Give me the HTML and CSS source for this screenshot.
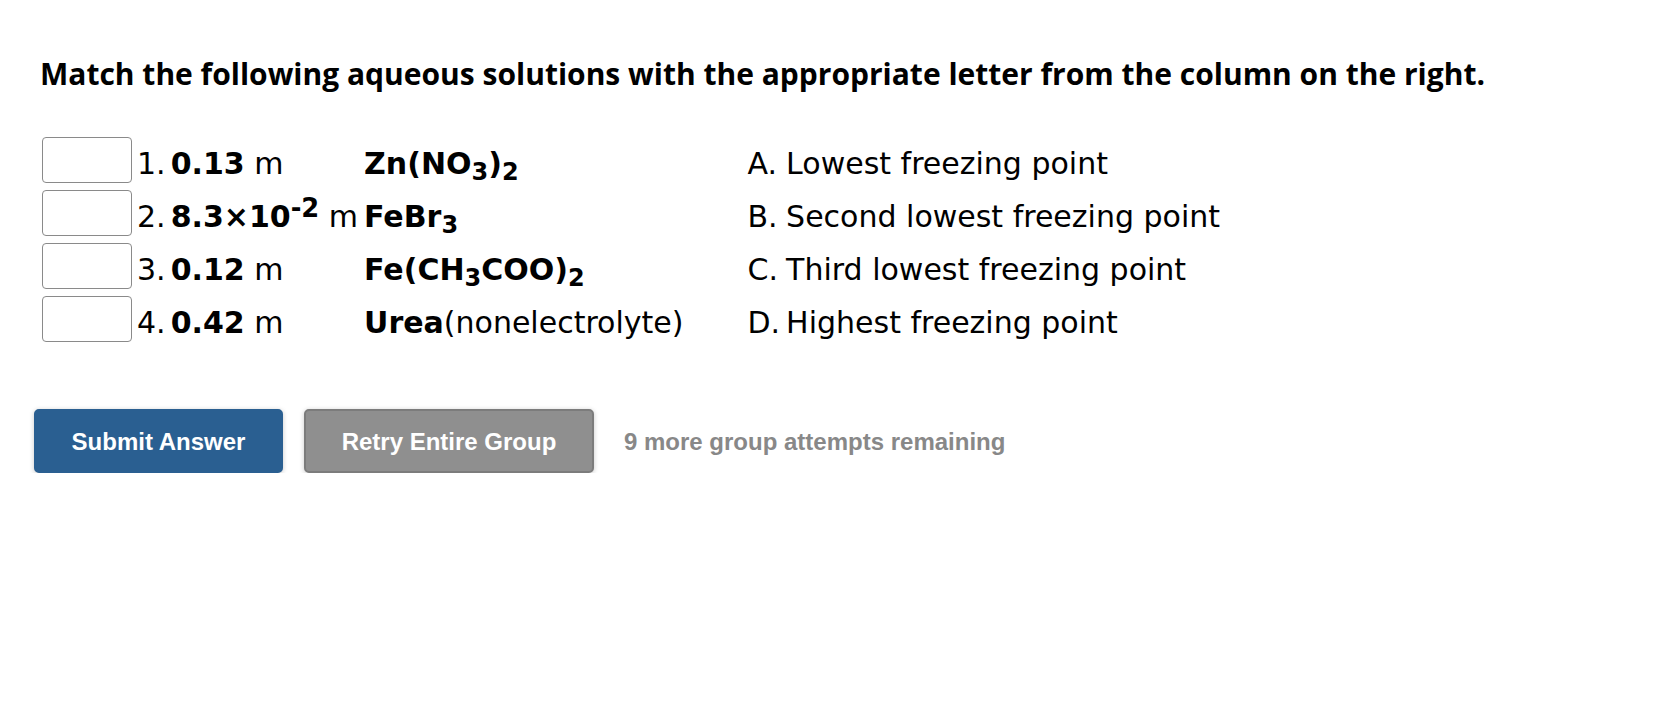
FILE: index.html
```html
<!DOCTYPE html>
<html lang="en">
<head>
<meta charset="utf-8">
<title>Match aqueous solutions</title>
<link rel="stylesheet" href="styles.css">
</head>
<body>
<div class="page">
  <p class="prompt">Match the following aqueous solutions with the appropriate letter from the column on the right.</p>

  <div class="match">
    <input class="ans" type="text" aria-label="Answer 1">
    <span class="num">1.</span>
    <span class="val"><b>0.13</b> m</span>
    <span class="formula"><b>Zn(NO<sub>3</sub>)<sub>2</sub></b></span>
    <span class="letter">A.</span>
    <span class="choice">Lowest freezing point</span>

    <input class="ans" type="text" aria-label="Answer 2">
    <span class="num">2.</span>
    <span class="val"><b>8.3×10<sup>-2</sup></b> m</span>
    <span class="formula"><b>FeBr<sub>3</sub></b></span>
    <span class="letter">B.</span>
    <span class="choice">Second lowest freezing point</span>

    <input class="ans" type="text" aria-label="Answer 3">
    <span class="num">3.</span>
    <span class="val"><b>0.12</b> m</span>
    <span class="formula"><b>Fe(CH<sub>3</sub>COO)<sub>2</sub></b></span>
    <span class="letter">C.</span>
    <span class="choice">Third lowest freezing point</span>

    <input class="ans" type="text" aria-label="Answer 4">
    <span class="num">4.</span>
    <span class="val"><b>0.42</b> m</span>
    <span class="formula"><b>Urea</b>(nonelectrolyte)</span>
    <span class="letter">D.</span>
    <span class="choice">Highest freezing point</span>
  </div>

  <div class="actions">
    <button class="btn btn-submit" type="button">Submit Answer</button>
    <button class="btn btn-retry" type="button">Retry Entire Group</button>
    <span class="remaining">9 more group attempts remaining</span>
  </div>
</div>
</body>
</html>
```

FILE: styles.css
```css
html, body {
  margin: 0;
  padding: 0;
  background: #ffffff;
}

.page {
  padding: 53px 0 0 40px;
  color: #000;
}

.prompt {
  margin: 0;
  font-family: "Open Sans", "DejaVu Sans", sans-serif;
  font-weight: 700;
  font-size: 30px;
  line-height: 41px;
  color: #000;
}

.match {
  margin-top: 43px;
  display: grid;
  grid-template-columns: 90px auto auto auto auto auto;
  grid-auto-rows: 46px;
  row-gap: 7px;
  align-items: center;
  justify-content: start;
  margin-left: 2px;
  font-family: "DejaVu Sans", Verdana, sans-serif;
  font-size: 30px;
}

.match > span {
  padding-top: 6px;
  line-height: 35px;
  white-space: nowrap;
}

.ans {
  box-sizing: border-box;
  width: 90px;
  height: 46px;
  margin: 0;
  border: 1.5px solid #8a8a8a;
  border-radius: 4px;
  background: #fff;
  padding: 0;
}

.num {
  padding-left: 5px;
}

.val {
  padding-left: 5px;
  padding-right: 6px;
}

.formula {
  padding-right: 64px;
}

.letter {
  padding-right: 6px;
}

.match b {
  font-weight: 700;
}

.match sub {
  font-size: 0.8em;
  vertical-align: -0.25em;
  line-height: 0;
}

.match sup {
  font-size: 0.86em;
  vertical-align: 0.4em;
  line-height: 0;
}

.actions {
  margin-top: 67px;
  display: flex;
  align-items: center;
  margin-left: -6px;
}

.btn {
  box-sizing: border-box;
  height: 64px;
  padding: 2px 0 0;
  border-radius: 5px;
  font-family: "Liberation Sans", Arial, sans-serif;
  font-weight: 700;
  font-size: 24px;
  color: #fff;
  white-space: nowrap;
  text-align: center;
  box-shadow: 0 1px 5px rgba(0, 0, 0, 0.22);
  cursor: pointer;
}

.btn-submit {
  width: 249px;
  background: #2a5f91;
  border: 2px solid #2a5f91;
}

.btn-retry {
  width: 290px;
  margin-left: 21px;
  background: #8f8f8f;
  border: 2px solid #7c7c7c;
}

.remaining {
  margin-left: 30px;
  padding-top: 2px;
  font-family: "Liberation Sans", Arial, sans-serif;
  font-weight: 700;
  font-size: 24px;
  color: #888888;
}
```
